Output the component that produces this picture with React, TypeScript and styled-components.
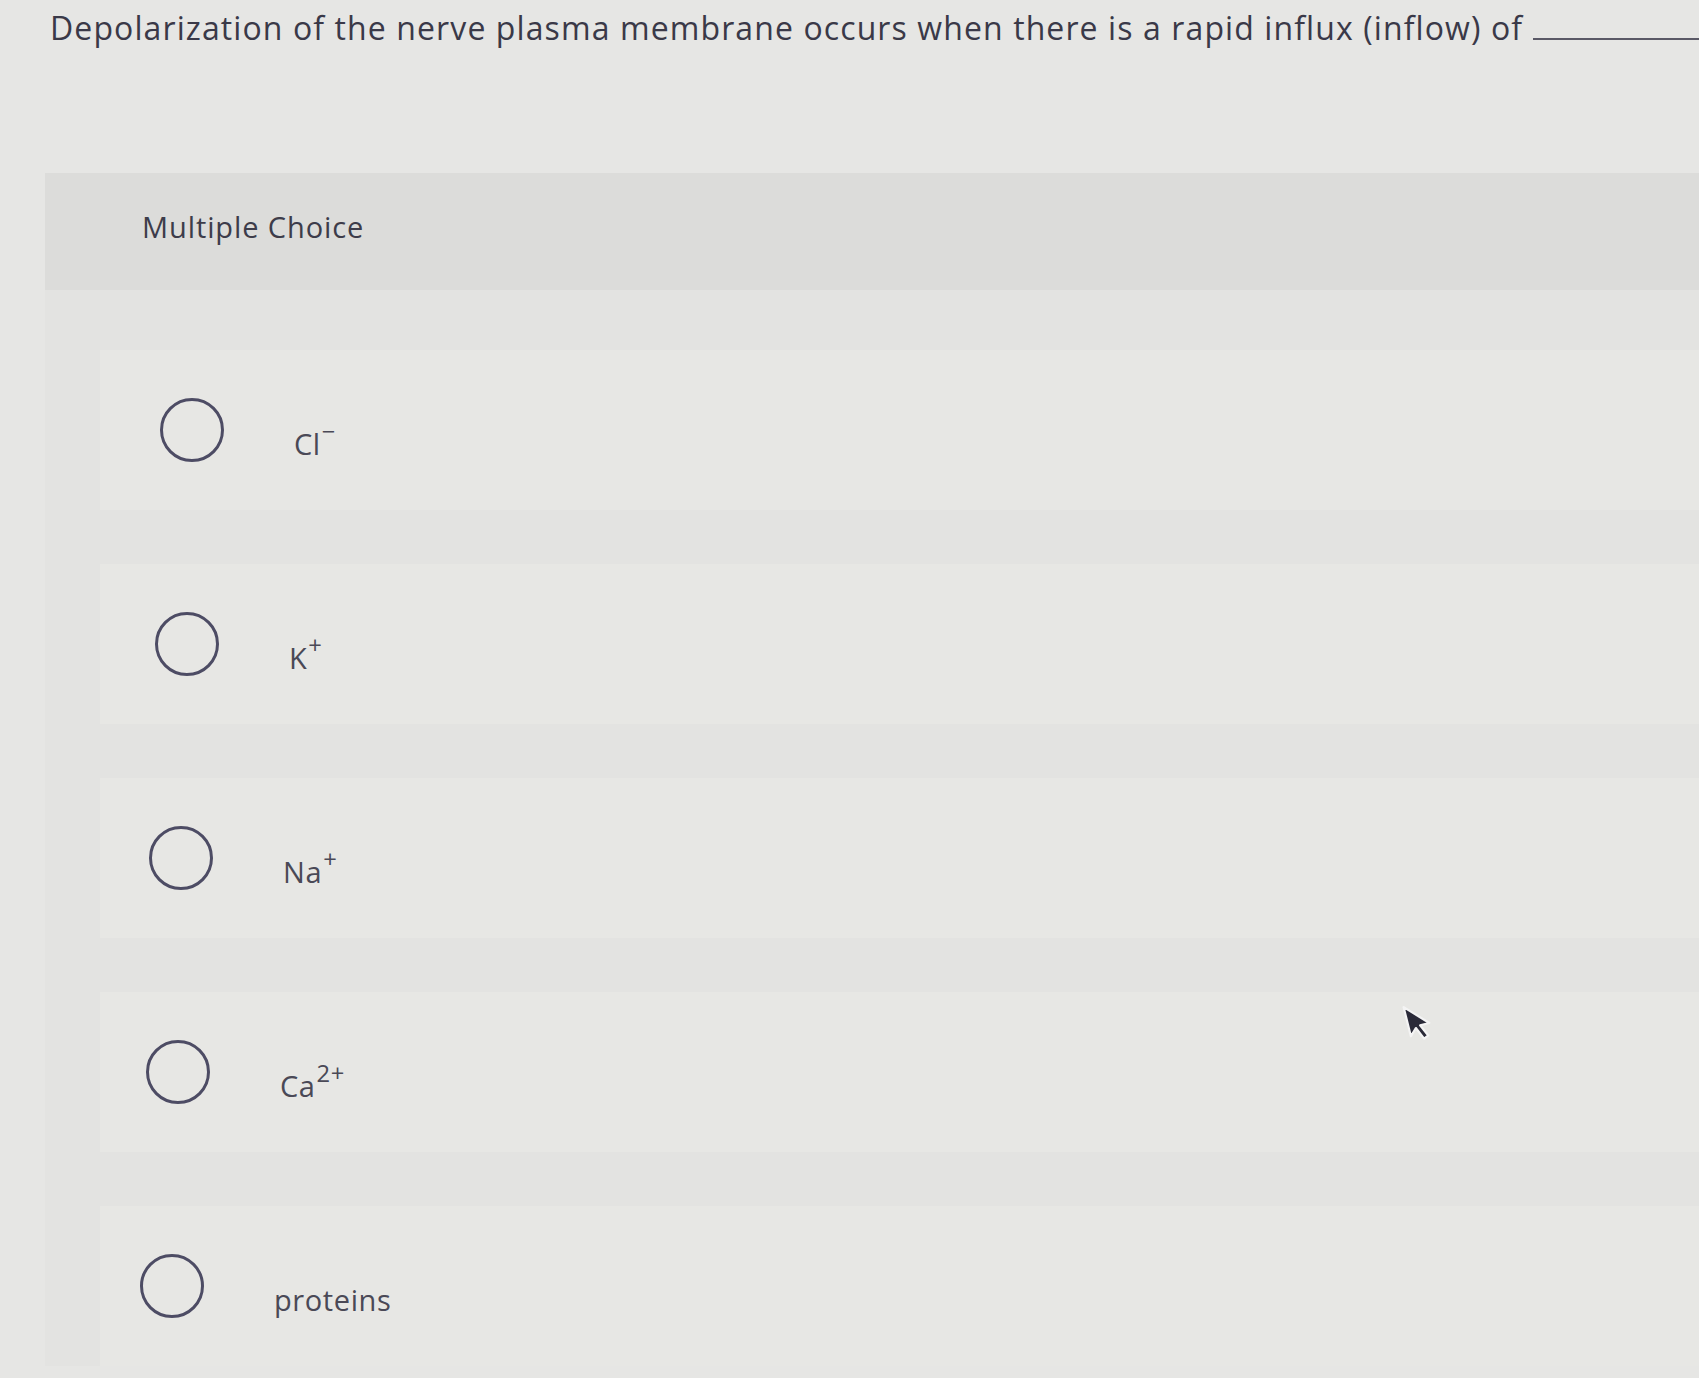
import React from "react";
import styled, { createGlobalStyle } from "styled-components";

const GlobalStyle = createGlobalStyle`
  html, body {
    margin: 0;
    padding: 0;
    background: #e5e5e3;
  }
  body {
    font-family: "Open Sans", "Liberation Sans", sans-serif;
    color: #3c3b4a;
  }
`;

const Page = styled.main`
  position: relative;
  width: 1699px;
  height: 1378px;
  overflow: hidden;
  background: #e6e6e4;
`;

const QuestionBar = styled.header`
  height: 173px;
  box-sizing: border-box;
  padding: 6px 0 0 50px;
  display: flex;
  align-items: flex-start;
  white-space: nowrap;
`;

const QuestionText = styled.h1`
  margin: 0;
  font-size: 32px;
  font-weight: 400;
  letter-spacing: 1.1px;
  line-height: 1.36;
  color: #3a3948;
`;

const Blank = styled.span`
  display: inline-block;
  width: 220px;
  margin-left: 10px;
  border-bottom: 2px solid #5a5966;
  vertical-align: baseline;
`;

const Card = styled.section`
  margin-left: 45px;
  background: #e2e2e0;
`;

const CardHeader = styled.div`
  height: 117px;
  box-sizing: border-box;
  padding: 0 0 11px 97px;
  display: flex;
  align-items: center;
  background: #dcdcda;
`;

const HeaderLabel = styled.h2`
  margin: 0;
  font-size: 29px;
  font-weight: 400;
  letter-spacing: 0.9px;
  color: #3d3c4a;
`;

const OptionList = styled.ul`
  list-style: none;
  margin: 0;
  padding: 60px 0 0 55px;
  display: flex;
  flex-direction: column;
  gap: 54px;
  background: #e3e3e1;
`;

const OptionRow = styled.li<{ $shift: number }>`
  height: 160px;
  box-sizing: border-box;
  padding-left: ${(p) => 60 - p.$shift}px;
  display: flex;
  align-items: center;
  background: #e7e7e4;
`;

const Radio = styled.span`
  flex: none;
  width: 64px;
  height: 64px;
  box-sizing: border-box;
  border: 3px solid #4d4c64;
  border-radius: 50%;
`;

const OptionLabel = styled.span`
  margin-left: 70px;
  padding-top: 26px;
  font-size: 29px;
  letter-spacing: 0.6px;
  color: #4a4956;
  line-height: 1;
`;

const Sup = styled.sup`
  font-size: 0.82em;
  vertical-align: 0.6em;
  line-height: 0;
  margin-left: 1px;
`;

const Pointer = styled.svg`
  position: absolute;
  left: 1399px;
  top: 1003px;
  transform: rotate(-14deg);
  transform-origin: 4px 2px;
`;

const options = [
  { id: "cl", shift: 0, label: <>Cl<Sup>−</Sup></> },
  { id: "k", shift: 5, label: <>K<Sup>+</Sup></> },
  { id: "na", shift: 11, label: <>Na<Sup>+</Sup></> },
  { id: "ca", shift: 14, label: <>Ca<Sup>2+</Sup></> },
  { id: "proteins", shift: 20, label: <>proteins</> },
];

export default function App() {
  return (
    <>
      <GlobalStyle />
      <Page>
        <QuestionBar>
          <QuestionText>
            Depolarization of the nerve plasma membrane occurs when there is a rapid influx (inflow) of
            <Blank />
          </QuestionText>
        </QuestionBar>
        <Card>
          <CardHeader>
            <HeaderLabel>Multiple Choice</HeaderLabel>
          </CardHeader>
          <OptionList>
            {options.map((o) => (
              <OptionRow key={o.id} $shift={o.shift}>
                <Radio />
                <OptionLabel>{o.label}</OptionLabel>
              </OptionRow>
            ))}
          </OptionList>
        </Card>
        <Pointer width="30" height="44" viewBox="-2 -2 22 32">
          <path
            d="M1 1 L1 23 L6 18 L10 27 L13.5 25.5 L9.5 16.8 L16.5 16.8 Z"
            fill="#2a2a38"
            stroke="#f4f4f4"
            strokeWidth="1.6"
            strokeLinejoin="round"
          />
        </Pointer>
      </Page>
    </>
  );
}
